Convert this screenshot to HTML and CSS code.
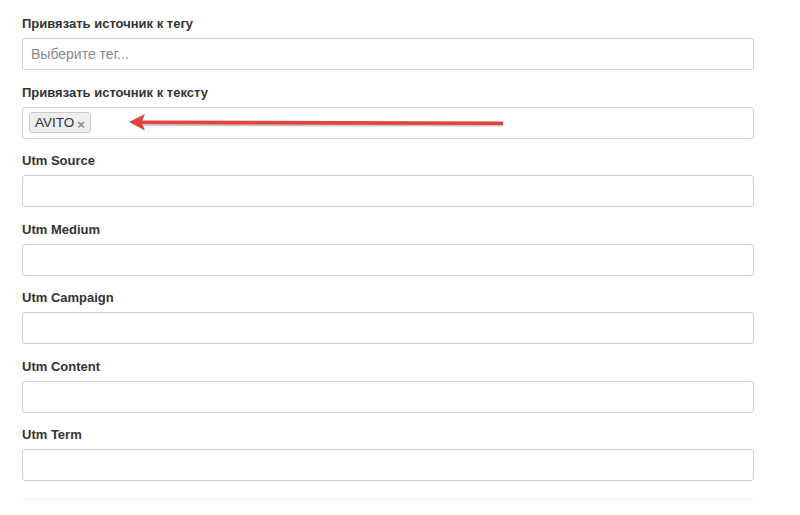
FILE: index.html
```html
<!DOCTYPE html>
<html lang="ru">
<head>
<meta charset="utf-8">
<title>Form</title>
<link rel="stylesheet" href="styles.css">
</head>
<body>
<div class="form">
  <div class="group">
    <label class="label">Привязать источник к тегу</label>
    <div class="input"><span class="placeholder">Выберите тег...</span></div>
  </div>
  <div class="group">
    <label class="label">Привязать источник к тексту</label>
    <div class="input tags">
      <span class="chip">AVITO<span class="chip-x">×</span></span>
      <svg class="arrow" width="380" height="20" viewBox="0 0 380 20">
        <line x1="14" y1="11.5" x2="374" y2="12" stroke="#9a9a9a" stroke-width="3" opacity="0.55"/>
        <line x1="12" y1="9.3" x2="374" y2="10.2" stroke="#e2433b" stroke-width="3.6"/>
        <path d="M0 9 L16 1 L12.5 9.3 L16 17.5 Z" fill="#e2433b"/>
      </svg>
    </div>
  </div>
  <div class="group">
    <label class="label">Utm Source</label>
    <div class="input"></div>
  </div>
  <div class="group">
    <label class="label">Utm Medium</label>
    <div class="input"></div>
  </div>
  <div class="group">
    <label class="label">Utm Campaign</label>
    <div class="input"></div>
  </div>
  <div class="group">
    <label class="label">Utm Content</label>
    <div class="input"></div>
  </div>
  <div class="group">
    <label class="label">Utm Term</label>
    <div class="input"></div>
  </div>
  <hr class="divider">
</div>
</body>
</html>
```

FILE: styles.css
```css
html, body {
  margin: 0;
  padding: 0;
  background: #ffffff;
}
body {
  font-family: "Liberation Sans", Arial, sans-serif;
  color: #333333;
}
.form {
  width: 732px;
  padding: 15px 0 0 22px;
}
.group {
  margin-bottom: 13.5px;
}
.label {
  display: block;
  font-size: 13px;
  font-weight: bold;
  line-height: 18px;
  margin-bottom: 5px;
  color: #333333;
}
.input {
  box-sizing: border-box;
  height: 32px;
  border: 1px solid #d0d0d0;
  border-radius: 3px;
  background: #fff;
  display: flex;
  align-items: center;
  padding: 0 8px;
  font-size: 14px;
}
.placeholder {
  color: #8a8a8a;
}
.tags {
  position: relative;
  padding-left: 6px;
}
.chip {
  display: inline-flex;
  align-items: center;
  box-sizing: border-box;
  height: 21px;
  padding: 0 5px 0 5px;
  background: #eeeeee;
  border: 1px solid #cccccc;
  border-radius: 3px;
  font-size: 13.5px;
  color: #333;
}
.chip-x {
  margin-left: 3px;
  margin-top: 3px;
  font-size: 13px;
  font-weight: bold;
  color: #888888;
}
.arrow {
  position: absolute;
  left: 106px;
  top: 5px;
}
.divider {
  border: 0;
  border-top: 1px solid #eeeeee;
  margin: 18px 0 0 0;
}
```
